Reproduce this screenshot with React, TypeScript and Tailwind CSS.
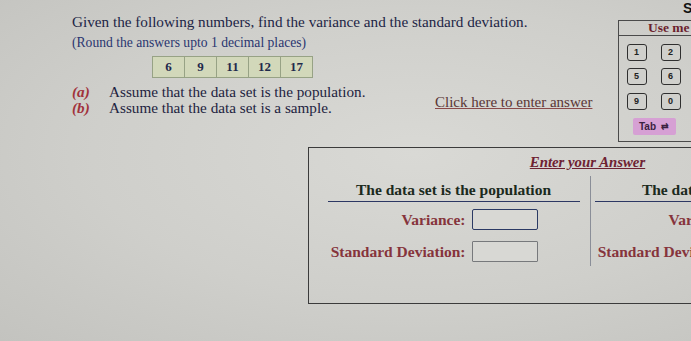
import { ReactNode } from 'react'

const serif = { fontFamily: '"Liberation Serif", "Times New Roman", serif' }
const sans = { fontFamily: '"Liberation Sans", Arial, sans-serif' }

const numbers = [6, 9, 11, 12, 17]

function Key({ children }: { children: ReactNode }) {
  return (
    <div
      className="w-[20px] h-[17px] border-[1.5px] border-[#2f2f2f] rounded-[3px] bg-[#d0d0cc] flex items-center justify-center text-[9px] font-bold text-[#222]"
      style={sans}
    >
      {children}
    </div>
  )
}

function AnswerColumn({ title }: { title: string }) {
  return (
    <div className="w-[252px] shrink-0 flex flex-col">
      <div className="pt-[6px] pb-[3px] border-b-[1.5px] border-[#2c3763] text-center text-[15.5px] leading-[16px] font-bold text-[#1b2a1c]">
        {title}
      </div>
      <div className="flex items-center h-[21px] mt-[7px] gap-[6px]">
        <span className="w-[138px] shrink-0 text-right text-[15.5px] leading-[18px] font-bold text-[#86343c] whitespace-nowrap">Variance:</span>
        <div className="w-[66px] h-[21px] shrink-0 border-[1.5px] border-[#2b3a64] rounded-[2px] bg-[#d8d8d4]" />
      </div>
      <div className="flex items-center h-[21px] mt-[11px] gap-[6px]">
        <span className="w-[138px] shrink-0 text-right text-[15.5px] leading-[18px] font-bold text-[#86343c] whitespace-nowrap">Standard Deviation:</span>
        <div className="w-[66px] h-[21px] shrink-0 border-[1.5px] border-[#77797c] rounded-[1px] bg-[#d8d8d4]" />
      </div>
    </div>
  )
}

export default function App() {
  return (
    <div
      className="w-[691px] h-[341px] overflow-hidden bg-[radial-gradient(ellipse_at_60%_45%,#d9d9d5_0%,#cfcfcb_55%,#c3c3bf_100%)]"
      style={serif}
    >
      <div className="flex h-[147px]">
        {/* question */}
        <div className="w-[618px] shrink-0 pl-[72px] pt-[13px]">
          <p className="text-[15.2px] leading-[17px] text-[#1d2546] whitespace-nowrap">
            Given the following numbers, find the variance and the standard deviation.
          </p>
          <p className="text-[13.6px] leading-[16px] mt-[5px] text-[#2a3670]">
            (Round the answers upto 1 decimal places)
          </p>
          <table className="ml-[80px] mt-[5px] border-collapse bg-[#d2d8ba]">
            <tbody>
              <tr>
                {numbers.map((n) => (
                  <td
                    key={n}
                    className="w-[32px] h-[20px] border border-[#97a285] text-center text-[13px] font-bold text-[#1f2a4c]"
                  >
                    {n}
                  </td>
                ))}
              </tr>
            </tbody>
          </table>
          <div className="flex mt-[6px]">
            <div className="w-[363px] shrink-0 text-[15.2px] leading-[16px] text-[#1d2340]">
              <div className="flex">
                <span className="w-[37px] shrink-0 font-bold italic text-[#a1323c]">(a)</span>
                <span>Assume that the data set is the population.</span>
              </div>
              <div className="flex">
                <span className="w-[37px] shrink-0 font-bold italic text-[#a1323c]">(b)</span>
                <span>Assume that the data set is a sample.</span>
              </div>
            </div>
            <div className="pt-[10px] text-[15px] leading-[16px] text-[#5a3636] underline decoration-[#8a4a4a] whitespace-nowrap">
              Click here to enter answer
            </div>
          </div>
        </div>

        {/* keypad */}
        <div className="w-[140px] shrink-0">
          <div className="h-[20px] pl-[65px] text-[14px] leading-[16px] font-bold text-[#111]" style={sans}>
            Score
          </div>
          <div className="h-[122px] border-[1.5px] border-r-0 border-[#4a4a4a]">
            <div className="h-[15px] border-b-[1.5px] border-[#4a4a4a] pl-[29px] text-[13.5px] leading-[13px] font-bold text-[#6b1f2e] whitespace-nowrap">
              Use me to enter
            </div>
            <div className="pl-[7.5px] pt-[8px]">
              <div className="flex gap-[14px]">
                <Key>1</Key>
                <Key>2</Key>
              </div>
              <div className="flex gap-[14px] mt-[7px]">
                <Key>5</Key>
                <Key>6</Key>
              </div>
              <div className="flex gap-[14px] mt-[8px]">
                <Key>9</Key>
                <Key>0</Key>
              </div>
              <div
                className="ml-[6px] mt-[8px] w-[43px] h-[17px] rounded-[2px] bg-[#d6a0d4] flex items-center justify-center gap-[5px] text-[10px] font-bold text-[#3a2240]"
                style={sans}
              >
                <span>Tab</span>
                <span className="text-[9px]">⇄</span>
              </div>
            </div>
          </div>
        </div>
      </div>

      {/* answer box */}
      <div className="ml-[308px] w-[559px] h-[157px] border-[1.5px] border-[#3b3b3b]">
        <div className="pt-[6px] text-center text-[14.8px] leading-[16px] font-bold italic underline text-[#6e2232]">
          Enter your Answer
        </div>
        <div className="flex mt-[6px] pl-[18.5px]">
          <AnswerColumn title="The data set is the population" />
          <div className="w-[10px] shrink-0" />
          <div className="w-[1.5px] h-[90px] bg-[#8a8e98] shrink-0" />
          <div className="w-[3.5px] shrink-0" />
          <AnswerColumn title="The data set is a sample" />
        </div>
      </div>
    </div>
  )
}
